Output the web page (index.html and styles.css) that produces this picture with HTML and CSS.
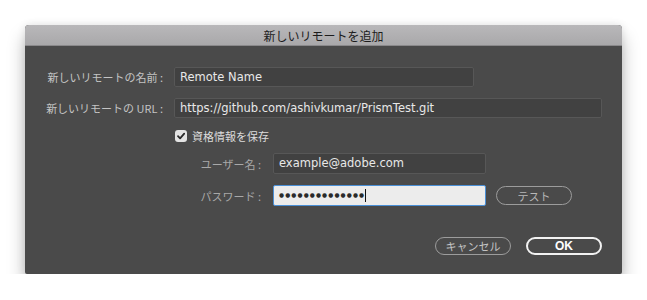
FILE: index.html
```html
<!DOCTYPE html>
<html lang="ja">
<head>
<meta charset="utf-8">
<link rel="stylesheet" href="styles.css">
</head>
<body>
<div class="stage">
  <div class="dialog">
    <div class="titlebar">新しいリモートを追加</div>
    <div class="content">
      <div class="row row-name">
        <div class="label">新しいリモートの名前 :</div>
        <div class="field field-name">Remote Name</div>
      </div>
      <div class="row row-url">
        <div class="label">新しいリモートの URL :</div>
        <div class="field field-url">https://github.com/ashivkumar/PrismTest.git</div>
      </div>
      <div class="check-row">
        <span class="checkbox"><svg width="12" height="12" viewBox="0 0 12 12"><path d="M3 6.2 L5.1 8.4 L9.2 3.6" fill="none" stroke="#2b2b2b" stroke-width="1.8" stroke-linecap="round" stroke-linejoin="round"/></svg></span>
        <span class="check-label">資格情報を保存</span>
      </div>
      <div class="row sub row-user">
        <div class="label sublabel">ユーザー名 :</div>
        <div class="field field-sub">example@adobe.com</div>
      </div>
      <div class="row sub row-pass">
        <div class="label sublabel">パスワード :</div>
        <div class="field field-sub field-pass"><span class="dots">●●●●●●●●●●●●●●</span><span class="caret"></span></div>
        <div class="btn btn-test">テスト</div>
      </div>
      <div class="actions">
        <div class="btn btn-cancel">キャンセル</div>
        <div class="btn btn-ok">OK</div>
      </div>
    </div>
  </div>
</div>
</body>
</html>
```
FILE: styles.css
```css
html, body {
  margin: 0;
  padding: 0;
  background: #ffffff;
}
body {
  font-family: "DejaVu Sans", "Noto Sans CJK JP", sans-serif;
}
.stage {
  padding: 25px 0 0 25px;
}
.dialog {
  width: 597px;
  height: 249px;
  background: #4a4a4a;
  border-radius: 4px 4px 2px 2px;
  box-shadow: 0 12px 18px rgba(0, 0, 0, 0.28), 0 0 8px rgba(0, 0, 0, 0.1);
  overflow: hidden;
}
.titlebar {
  height: 20px;
  line-height: 21px;
  background: linear-gradient(#b9b8ba, #a9a8aa);
  border-bottom: 1px solid #8a898b;
  text-align: center;
  font-family: "Noto Sans CJK JP", sans-serif;
  font-size: 12px;
  color: #1c1c1c;
}
.content {
  display: flex;
  flex-direction: column;
  padding: 21px 20px 0 0;
}
.row {
  display: flex;
  align-items: center;
}
.label {
  width: 138px;
  flex: none;
  text-align: right;
  font-family: "Noto Sans CJK JP", sans-serif;
  font-size: 11px;
  color: #c4c4c4;
  margin-right: 11px;
  white-space: nowrap;
}
.field {
  box-sizing: border-box;
  height: 20px;
  line-height: 18px;
  background: #414141;
  border: 1px solid #575757;
  border-radius: 2px;
  padding-left: 5px;
  font-size: 11.5px;
  color: #e8e8e8;
  white-space: nowrap;
  overflow: hidden;
}
.field-name { width: 300px; }
.field-url { width: 428px; }
.row-url { margin-top: 11px; }
.check-row {
  display: flex;
  align-items: center;
  margin: 11px 0 0 150px;
  height: 13px;
}
.checkbox {
  width: 12px;
  height: 12px;
  background: #e4e4e4;
  border-radius: 3px;
  display: flex;
}
.check-label {
  margin-left: 5px;
  font-family: "Noto Sans CJK JP", sans-serif;
  font-size: 11px;
  color: #dcdcdc;
}
.sublabel {
  width: 236px;
  margin-right: 12px;
  color: #a8a8a8;
}
.row-user { margin-top: 11px; }
.row-pass { margin-top: 11px; }
.field-sub { width: 213px; height: 21px; line-height: 19px; }
.field-pass {
  background: #ececec;
  border-color: #4a8fd6;
  color: #2a2a2a;
  display: flex;
  align-items: center;
  padding-left: 5px;
}
.dots {
  font-size: 5.8px;
  letter-spacing: 1.1px;
  line-height: 19px;
  font-family: "DejaVu Sans", sans-serif;
}
.caret {
  width: 1px;
  height: 13px;
  background: #111;
  margin-left: 0;
}
.btn {
  box-sizing: border-box;
  width: 76px;
  height: 19px;
  border-radius: 10px;
  display: flex;
  align-items: center;
  justify-content: center;
  font-family: "Noto Sans CJK JP", sans-serif;
  font-size: 11px;
}
.btn-test {
  margin-left: 10px;
  border: 1px solid #9c9c9c;
  color: #b8b8b8;
}
.actions {
  display: flex;
  justify-content: flex-end;
  gap: 15px;
  margin-top: 31px;
}
.btn-cancel {
  border: 1px solid #9c9c9c;
  color: #c4c4c4;
  height: 18px;
}
.btn-ok {
  border: 2px solid #f2f2f2;
  color: #ffffff;
  font-family: "Liberation Sans", sans-serif;
  font-weight: bold;
  font-size: 12px;
  height: 18px;
}
```
